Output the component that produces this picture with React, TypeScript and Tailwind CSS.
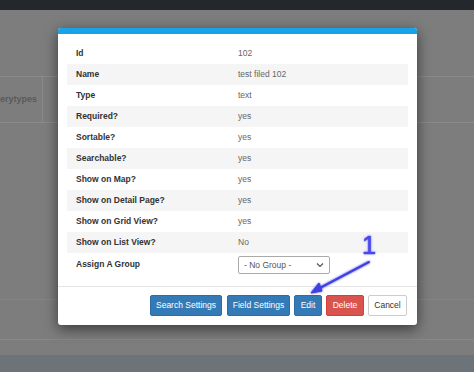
import React from "react";

const rows: [string, string][] = [
  ["Id", "102"],
  ["Name", "test filed 102"],
  ["Type", "text"],
  ["Required?", "yes"],
  ["Sortable?", "yes"],
  ["Searchable?", "yes"],
  ["Show on Map?", "yes"],
  ["Show on Detail Page?", "yes"],
  ["Show on Grid View?", "yes"],
  ["Show on List View?", "No"],
];

export default function App() {
  return (
    <div
      className="relative w-[474px] h-[372px] overflow-hidden bg-[#7d7d7d] flex flex-col"
      style={{ fontFamily: '"Liberation Sans", Arial, sans-serif' }}
    >
      {/* page behind overlay */}
      <div className="h-[10px] bg-[#24282c] shrink-0" />
      <div className="h-[66px] shrink-0" />
      <div className="h-[47px] shrink-0 border-y border-[#8a8a8a] flex">
        <div className="w-[43px] border-r border-[#8a8a8a] flex items-center text-[9px] font-bold text-[#5a5a5a]">
          erytypes
        </div>
      </div>
      <div className="h-[176px] shrink-0" />
      <div className="h-[40px] shrink-0 border-t border-[#868686]" />
      <div className="h-[16px] shrink-0 border-t border-[#888888]" />
      <div className="flex-1 bg-[#6c7379]" />

      {/* modal */}
      <div className="absolute left-[58px] top-[28px] w-[359px] h-[297px] bg-white rounded-[3px] shadow-[0_4px_14px_rgba(0,0,0,0.55)] flex flex-col overflow-hidden">
        <div className="h-[6px] bg-[#18a3e8] shrink-0" />
        <div className="px-[9px] pt-[9px] pb-[9px] flex flex-col">
          {rows.map(([k, v], i) => (
            <div
              key={k}
              className={`grid grid-cols-[170px_1fr] h-[21px] items-center text-[8.5px] ${
                i % 2 === 1 ? "bg-[#f5f5f5]" : ""
              }`}
            >
              <div className="pl-[9px] font-bold text-[#333]">{k}</div>
              <div className="text-[#666] pl-[1px]">{v}</div>
            </div>
          ))}
          <div className="grid grid-cols-[170px_1fr] h-[24px] items-start pt-[3px] text-[8.5px]">
            <div className="pl-[9px] font-bold text-[#333] pt-[2px]">Assign A Group</div>
            <div className="pl-[1px]">
              <div className="w-[92px] h-[18px] border border-[#aaa] rounded-[2px] flex items-center justify-between px-[5px] text-[#555]">
                <span>- No Group -</span>
                <svg width="8" height="6" viewBox="0 0 8 6">
                  <path d="M1 1.5 L4 4.5 L7 1.5" fill="none" stroke="#555" strokeWidth="1.2" />
                </svg>
              </div>
            </div>
          </div>
        </div>
        <div className="border-t border-[#e5e5e5] flex-1 flex justify-end items-start pt-[8px] pr-[10px] gap-[4px] text-[8.5px]">
          <button className="w-[72px] h-[21px] bg-[#337ab7] text-white rounded-[2px] border border-[#2e6da4] mr-[1px]">
            Search Settings
          </button>
          <button className="w-[63px] h-[21px] bg-[#337ab7] text-white rounded-[2px] border border-[#2e6da4]">
            Field Settings
          </button>
          <button className="w-[28px] h-[21px] bg-[#337ab7] text-white rounded-[2px] border border-[#2e6da4]">
            Edit
          </button>
          <button className="w-[38px] h-[21px] bg-[#d9534f] text-white rounded-[2px] border border-[#d43f3a]">
            Delete
          </button>
          <button className="w-[39px] h-[21px] bg-white text-[#333] rounded-[2px] border border-[#ccc]">
            Cancel
          </button>
        </div>
      </div>

      {/* annotation */}
      <div className="absolute left-[362px] top-[233px] text-[25px] leading-none text-[#4848e8] [-webkit-text-stroke:0.7px_#4848e8] [text-shadow:0_0_3px_rgba(130,130,255,0.9)]">
        1
      </div>
      <svg
        className="absolute left-0 top-0 pointer-events-none"
        width="474"
        height="372"
        viewBox="0 0 474 372"
      >
        <defs>
          <filter id="glow" x="-20%" y="-20%" width="140%" height="140%">
            <feGaussianBlur stdDeviation="1.2" result="b" />
            <feMerge>
              <feMergeNode in="b" />
              <feMergeNode in="SourceGraphic" />
            </feMerge>
          </filter>
        </defs>
        <g filter="url(#glow)">
          <line x1="369" y1="262" x2="318" y2="289" stroke="#4040e0" strokeWidth="2" strokeLinecap="round" />
          <path d="M311 293 L319 283 L322 291 Z" fill="#4040e0" stroke="#4040e0" strokeWidth="1" strokeLinejoin="round" />
        </g>
      </svg>
    </div>
  );
}
